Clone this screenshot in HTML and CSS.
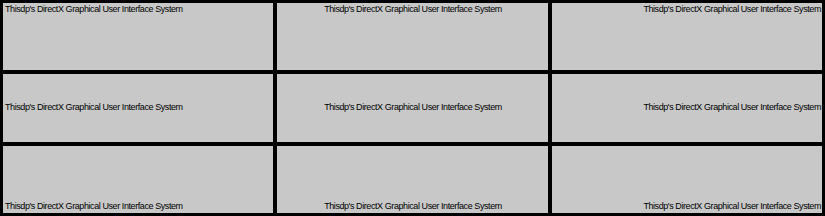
FILE: index.html
```html
<!DOCTYPE html>
<html lang="en">
<head>
  <meta charset="UTF-8" />
  <title>dxGUI labels</title>
  <link rel="stylesheet" href="styles.css">
</head>
<body>
  <div class="board">
    <div class="cell top left"><span>Thisdp's DirectX Graphical User Interface System</span></div>
    <div class="cell top center"><span>Thisdp's DirectX Graphical User Interface System</span></div>
    <div class="cell top right"><span>Thisdp's DirectX Graphical User Interface System</span></div>
    <div class="cell middle left"><span>Thisdp's DirectX Graphical User Interface System</span></div>
    <div class="cell middle center"><span>Thisdp's DirectX Graphical User Interface System</span></div>
    <div class="cell middle right"><span>Thisdp's DirectX Graphical User Interface System</span></div>
    <div class="cell bottom left"><span>Thisdp's DirectX Graphical User Interface System</span></div>
    <div class="cell bottom center"><span>Thisdp's DirectX Graphical User Interface System</span></div>
    <div class="cell bottom right"><span>Thisdp's DirectX Graphical User Interface System</span></div>
  </div>
</body>
</html>
```

FILE: styles.css
```css
* {
  margin: 0;
  padding: 0;
  box-sizing: border-box;
}

html, body {
  width: 825px;
  height: 216px;
  background-color: #000;
  overflow: hidden;
}

.board {
  display: grid;
  grid-template-columns: repeat(3, 1fr);
  grid-template-rows: repeat(3, 1fr);
  gap: 4px;
  padding: 3px;
  height: 216px;
}

.cell {
  background-color: #c8c8c8;
  display: flex;
  padding: 1px 1px 1px 2px;
  font-family: 'Liberation Sans', Arial, sans-serif;
  font-size: 9px;
  letter-spacing: -0.42px;
  line-height: 11px;
  color: #000;
}

.top { align-items: flex-start; }
.middle { align-items: center; }
.bottom { align-items: flex-end; }

.left { justify-content: flex-start; }
.center { justify-content: center; }
.right { justify-content: flex-end; }
```
